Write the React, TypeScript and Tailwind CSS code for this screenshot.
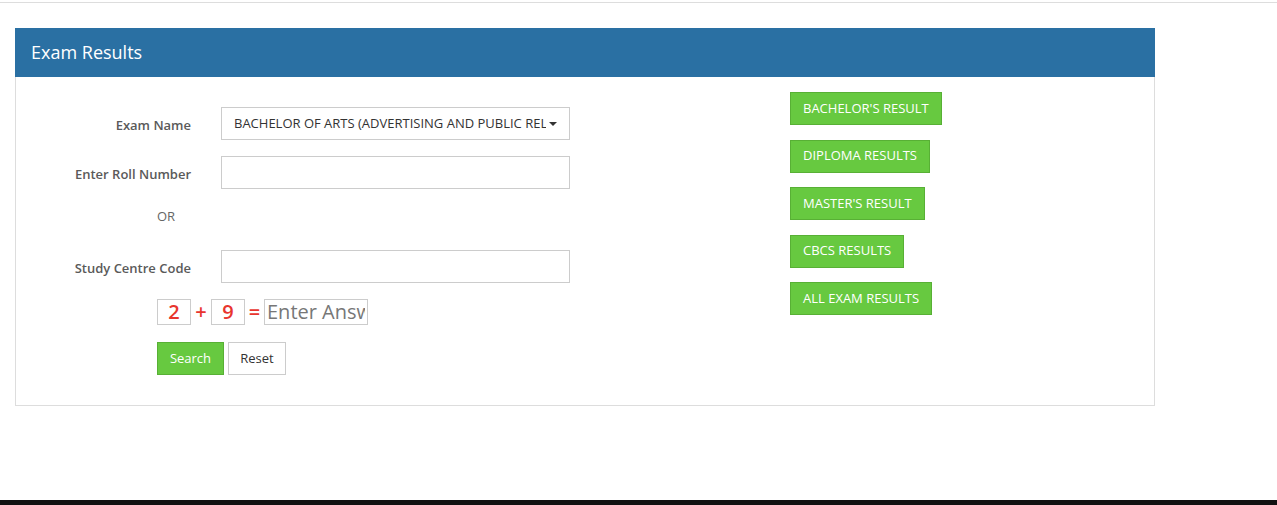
import React from 'react';

const links = ["BACHELOR'S RESULT", 'DIPLOMA RESULTS', "MASTER'S RESULT", 'CBCS RESULTS', 'ALL EXAM RESULTS'];

const Label = ({ children }: { children: React.ReactNode }) => (
    <label className="w-[175px] shrink-0 mt-[4px] text-right text-[13px] font-semibold text-[#5a5a5a]">{children}</label>
);

const App = () => {
    return (
        <div className="min-h-[505px] flex flex-col bg-white" style={{ fontFamily: '"Open Sans", "Liberation Sans", sans-serif' }}>
            <div className="h-[2px]"></div>
            <div className="h-px bg-[#ddd]"></div>

            <div className="pl-[15px] pt-[25px]">
                <div className="w-[1140px]">
                    {/* Header */}
                    <div className="h-[49px] bg-[#2a70a3] flex items-center pl-[16px]">
                        <h2 className="text-[18px] text-white font-normal">Exam Results</h2>
                    </div>

                    {/* Body */}
                    <div className="border border-t-0 border-[#ddd] flex">
                        <div className="w-[774px] pt-[30px] pb-[30px]">
                            <div className="flex items-center">
                                <Label>Exam Name</Label>
                                <div className="ml-[30px] w-[349px] h-[33px] border border-[#ccc] flex items-center pl-[12px]">
                                    <span className="w-[312px] overflow-hidden whitespace-nowrap text-[13px] text-[#333]">BACHELOR OF ARTS (ADVERTISING AND PUBLIC RELATIONS)</span>
                                    <span className="ml-[3px] w-0 h-0 border-l-[4px] border-r-[4px] border-t-[4px] border-l-transparent border-r-transparent border-t-[#333]"></span>
                                </div>
                            </div>

                            <div className="flex items-center mt-[16px]">
                                <Label>Enter Roll Number</Label>
                                <input className="ml-[30px] w-[349px] h-[33px] border border-[#ccc] outline-none px-[12px] text-[13px]" />
                            </div>

                            <div className="mt-[17px] pl-[141px] h-[20px] leading-[20px] text-[13px] text-[#666]">OR</div>

                            <div className="flex items-center mt-[24px]">
                                <Label>Study Centre Code</Label>
                                <input className="ml-[30px] w-[349px] h-[33px] border border-[#ccc] outline-none px-[12px] text-[13px]" />
                            </div>

                            {/* Captcha */}
                            <div className="flex items-center mt-[16px] pl-[141px] h-[26px]">
                                <div className="w-[34px] h-[26px] border border-[#ccc] flex items-center justify-center text-[20px] font-semibold text-[#e8352e]">2</div>
                                <span className="w-[20px] text-center text-[20px] text-[#e8352e] font-semibold">+</span>
                                <div className="w-[34px] h-[26px] border border-[#ccc] flex items-center justify-center text-[20px] font-semibold text-[#e8352e]">9</div>
                                <span className="w-[19px] text-center text-[20px] text-[#e8352e] font-semibold">=</span>
                                <input placeholder="Enter Answer" className="w-[104px] h-[26px] border border-[#ccc] outline-none px-[2px] text-[20px] placeholder:text-[#777]" />
                            </div>

                            <div className="flex mt-[17px] pl-[141px] gap-[4px]">
                                <button className="w-[67px] h-[33px] bg-[#67c940] border border-[#58b035] text-white text-[13px]">Search</button>
                                <button className="w-[58px] h-[33px] bg-white border border-[#ccc] text-[#333] text-[13px]">Reset</button>
                            </div>
                        </div>

                        <div className="pt-[15px] flex flex-col items-start gap-[14.5px]">
                            {links.map((l) => (
                                <button key={l} className="h-[33px] px-[12px] bg-[#67c940] border border-[#58b035] text-white text-[13px]">{l}</button>
                            ))}
                        </div>
                    </div>
                </div>
            </div>

            <div className="flex-1"></div>
            <div className="h-[5px] bg-[#111]"></div>
        </div>
    );
};

export default App;
